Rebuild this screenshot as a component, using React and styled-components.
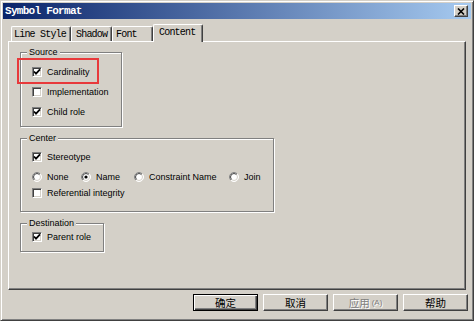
import React from 'react';
import styled, { createGlobalStyle } from 'styled-components';

const Global = createGlobalStyle`
  html, body { margin: 0; padding: 0; background: #d4d0c8; }
  body { font-family: "Liberation Sans", Arial, sans-serif; }
`;

const Window = styled.div`
  box-sizing: border-box;
  width: 474px;
  height: 321px;
  background: #d4d0c8;
  border: 1px solid;
  border-color: #d4d0c8 #404040 #404040 #d4d0c8;
  box-shadow: inset 1px 1px 0 #fff, inset -1px -1px 0 #808080;
  padding: 2px;
  display: flex;
  flex-direction: column;
`;

const TitleBar = styled.div`
  height: 16px;
  flex: none;
  background: linear-gradient(to right, #0a246a, #a6caf0);
  display: flex;
  align-items: center;
  justify-content: space-between;
  padding: 0 3px 0 2px;
`;

const Title = styled.span`
  font-family: "Liberation Mono", "Courier New", monospace;
  font-weight: bold;
  font-size: 11px;
  letter-spacing: -0.7px;
  color: #fff;
  line-height: 16px;
`;

const CloseButton = styled.span`
  box-sizing: border-box;
  width: 14px;
  height: 12px;
  background: #d4d0c8;
  border: 1px solid;
  border-color: #fff #404040 #404040 #fff;
  box-shadow: inset -1px -1px 0 #808080;
  display: flex;
  align-items: center;
  justify-content: center;
`;

const Body = styled.div`
  flex: 1;
  display: flex;
  flex-direction: column;
  padding: 5px 5px 0;
`;

const TabStrip = styled.div`
  display: flex;
  align-items: flex-end;
  height: 18px;
  padding-left: 3px;
  margin-bottom: -1px;
  position: relative;
  z-index: 1;
`;

const Tab = styled.div`
  box-sizing: border-box;
  width: ${p => p.w}px;
  height: ${p => (p.active ? 18 : 15)}px;
  margin-bottom: ${p => (p.active ? 0 : 1)}px;
  padding: 2px 0 0 ${p => p.pad}px;
  background: #d4d0c8;
  border-top: 1px solid #fff;
  border-left: 1px solid #fff;
  border-right: 1px solid #404040;
  box-shadow: inset -1px 0 0 #808080;
  border-top-left-radius: 2px;
  border-top-right-radius: 2px;
  font-family: "Liberation Mono", "Courier New", monospace;
  font-size: 10px;
  letter-spacing: -0.8px;
  line-height: 11px;
  color: #000;
  white-space: nowrap;
`;

const Panel = styled.div`
  box-sizing: border-box;
  height: 249px;
  flex: none;
  background: #d4d0c8;
  border: 1px solid;
  border-color: #fff #404040 #404040 #fff;
  box-shadow: inset -1px -1px 0 #808080;
  padding: 10px 0 0 11px;
  display: flex;
  flex-direction: column;
  align-items: flex-start;
`;

const Group = styled.div`
  box-sizing: border-box;
  position: relative;
  width: ${p => p.w}px;
  margin-top: ${p => p.mt || 0}px;
  padding: ${p => p.pt}px 0 ${p => p.pb}px;
  border: 1px solid #808080;
  box-shadow: inset 1px 1px 0 #fff, 1px 1px 0 #fff;
  display: flex;
  flex-direction: column;
`;

const Legend = styled.span`
  position: absolute;
  top: -7px;
  left: 6px;
  padding: 0 2px;
  background: #d4d0c8;
  font-size: 9px;
  line-height: 12px;
  color: #000;
`;

const Row = styled.div`
  position: relative;
  display: flex;
  align-items: center;
  height: ${p => p.h || 20}px;
  margin-top: ${p => p.mt || 0}px;
  padding-left: 11px;
  font-size: 9px;
  color: #000;
`;

const Option = styled.label`
  display: flex;
  align-items: center;
  gap: 5px;
  width: ${p => (p.w ? `${p.w}px` : 'auto')};
  flex: none;
  white-space: nowrap;
`;

const Box = styled.span`
  box-sizing: border-box;
  width: 10px;
  height: 10px;
  flex: none;
  background: #fff;
  border: 1px solid;
  border-color: #808080 #fff #fff #808080;
  box-shadow: inset 1px 1px 0 #404040, inset -1px -1px 0 #d4d0c8;
  display: flex;
  align-items: center;
  justify-content: center;
`;

const Highlight = styled.span`
  position: absolute;
  left: -4px;
  top: -4px;
  width: 82px;
  height: 26px;
  box-sizing: border-box;
  border: 2px solid #e8393b;
  pointer-events: none;
`;

const ButtonRow = styled.div`
  display: flex;
  justify-content: flex-end;
  gap: 5px;
  margin-top: 4px;
  margin-right: -2px;
`;

const Button = styled.button`
  box-sizing: border-box;
  width: 65px;
  height: 17px;
  padding: 0;
  background: #d4d0c8;
  border: 1px solid;
  border-color: ${p => (p.def ? '#000' : '#fff #404040 #404040 #fff')};
  box-shadow: ${p =>
    p.def
      ? 'inset 1px 1px 0 #fff, inset -1px -1px 0 #404040, inset -2px -2px 0 #808080'
      : 'inset -1px -1px 0 #808080'};
  font-family: "Noto Sans CJK SC", "Liberation Sans", sans-serif;
  font-size: 10.5px;
  line-height: 15px;
  color: ${p => (p.disabled ? '#808080' : '#000')};
  text-shadow: ${p => (p.disabled ? '1px 1px 0 #fff' : 'none')};
  display: flex;
  align-items: center;
  justify-content: center;
`;

const Small = styled.span`
  font-family: "Liberation Sans", sans-serif;
  font-size: 8px;
  margin-left: 2px;
`;

const Check = ({ checked }) => (
  <Box>
    {checked && (
      <svg width="8" height="8" viewBox="0 0 8 8">
        <polyline points="1,3.5 3,5.6 7,1.4" fill="none" stroke="#000" strokeWidth="1.8" />
      </svg>
    )}
  </Box>
);

const Radio = ({ checked }) => (
  <svg width="10" height="10" viewBox="0 0 10 10" style={{ flex: 'none' }}>
    <defs>
      <linearGradient id="rg" x1="0" y1="0" x2="1" y2="1">
        <stop offset="0.45" stopColor="#808080" />
        <stop offset="0.55" stopColor="#ffffff" />
      </linearGradient>
      <linearGradient id="rg2" x1="0" y1="0" x2="1" y2="1">
        <stop offset="0.45" stopColor="#404040" />
        <stop offset="0.55" stopColor="#d4d0c8" />
      </linearGradient>
    </defs>
    <circle cx="5" cy="5" r="4.5" fill="#fff" stroke="url(#rg)" strokeWidth="1" />
    <circle cx="5" cy="5" r="3.5" fill="none" stroke="url(#rg2)" strokeWidth="1" />
    {checked && <circle cx="5" cy="5" r="1.6" fill="#000" />}
  </svg>
);

const CheckRow = ({ label, checked, children, h, mt }) => (
  <Row h={h} mt={mt}>
    <Option>
      <Check checked={checked} />
      {label}
    </Option>
    {children}
  </Row>
);

export default function App() {
  return (
    <>
      <Global />
      <Window>
        <TitleBar>
          <Title>Symbol Format</Title>
          <CloseButton>
            <svg width="8" height="7" viewBox="0 0 8 7">
              <path d="M1 0.5 L7 6.5 M7 0.5 L1 6.5" stroke="#000" strokeWidth="1.6" />
            </svg>
          </CloseButton>
        </TitleBar>
        <Body>
          <TabStrip>
            <Tab w={60} pad={2}>Line Style</Tab>
            <Tab w={41} pad={4}>Shadow</Tab>
            <Tab w={41} pad={3}>Font</Tab>
            <Tab w={50} pad={5} active>Content</Tab>
          </TabStrip>
          <Panel>
            <Group w={102} pt={9} pb={4}>
              <Legend>Source</Legend>
              <CheckRow label="Cardinality" checked>
                <Highlight />
              </CheckRow>
              <CheckRow label="Implementation" />
              <CheckRow label="Child role" checked />
            </Group>
            <Group w={254} mt={11} pt={8} pb={10}>
              <Legend>Center</Legend>
              <CheckRow label="Stereotype" checked />
              <Row>
                <Option w={49}><Radio />None</Option>
                <Option w={53}><Radio checked />Name</Option>
                <Option w={95}><Radio />Constraint Name</Option>
                <Option><Radio />Join</Option>
              </Row>
              <CheckRow label="Referential integrity" h={16} mt={-2} />
            </Group>
            <Group w={84} mt={11} pt={3} pb={4}>
              <Legend>Destination</Legend>
              <CheckRow label="Parent role" checked />
            </Group>
          </Panel>
          <ButtonRow>
            <Button def>确定</Button>
            <Button>取消</Button>
            <Button disabled>应用<Small>(A)</Small></Button>
            <Button>帮助</Button>
          </ButtonRow>
        </Body>
      </Window>
    </>
  );
}
